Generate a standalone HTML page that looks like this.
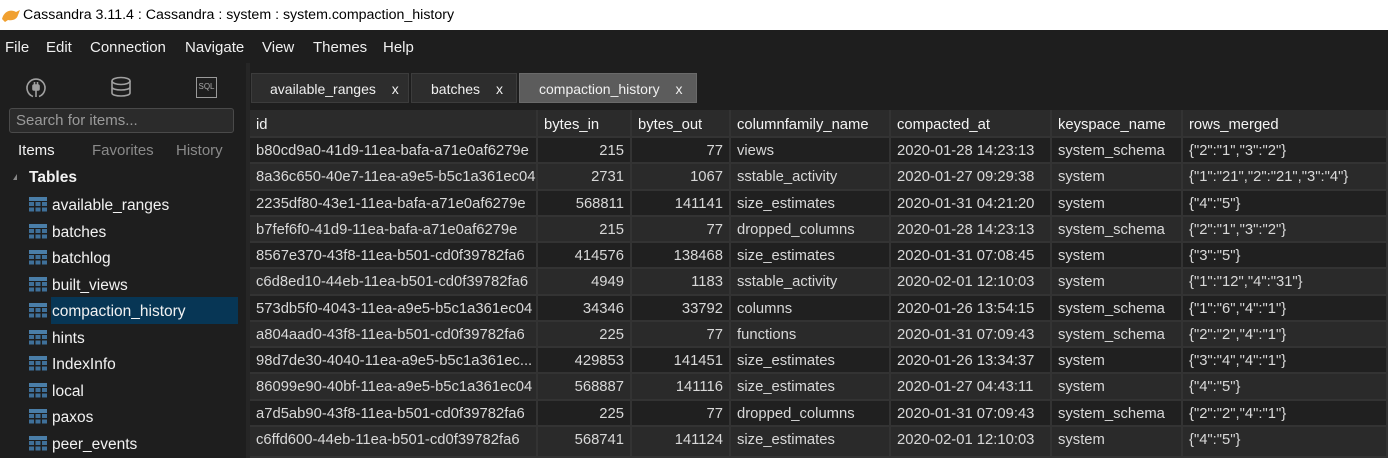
<!DOCTYPE html>
<html style="overflow:hidden;height:458px"><head><meta charset="utf-8"><style>
*{margin:0;padding:0;box-sizing:border-box}
body{width:1388px;height:458px;overflow:hidden;background:#1e1e1e;font-family:"Liberation Sans",sans-serif;color:#e8e8e8;position:relative}
.title{position:absolute;left:0;top:0;width:1388px;height:30px;background:#fff;color:#000;font-size:14.2px;line-height:30px;padding-left:23px}
.menu{position:absolute;top:30px;left:0;width:1388px;height:33px;background:#1e1e1e;font-size:15px;line-height:36px}
.menu span{position:absolute;color:#f0f0f0}
.side{position:absolute;top:63px;left:0;width:246px;height:395px;background:#1e1e1e}
.split{position:absolute;top:63px;left:246px;width:4px;height:395px;background:#262626}
.search{position:absolute;left:9px;top:108px;width:225px;height:25px;border:1px solid #4a4a4a;border-radius:3px;background:#2b2b2b;color:#9a9a9a;font-size:15px;line-height:24px;padding-left:6px}
.tree{position:absolute;font-size:15.5px;color:#f2f2f2}
.ti{position:absolute;left:29px;width:18px;height:15px}
.tab{position:absolute;top:73px;height:30px;background:#2d2d2d;border:1px solid #3c3c3c;font-size:14px;line-height:31px;color:#f0f0f0}
.row{position:absolute;left:250px;width:1138px;height:26px;overflow:hidden}
.c{position:absolute;top:0;height:100%;font-size:14.8px;padding:3px 6px 0;white-space:nowrap;overflow:hidden;border-right:2px solid #333;border-bottom:2px solid #333}
.r{text-align:right}
</style></head><body>
<div class="title"><svg style="position:absolute;left:1px;top:7px" width="20" height="16" viewBox="0 0 20 16"><path d="M1 12 C3 4 10 2 15 5 L19 3 L17 8 C16 12 12 14 7 13 L4 15 Z" fill="#f0a030"/></svg>Cassandra 3.11.4 : Cassandra : system : system.compaction_history</div>
<div class="menu"><span style="left:5px">File</span><span style="left:46px">Edit</span><span style="left:90px">Connection</span><span style="left:185px">Navigate</span><span style="left:262px">View</span><span style="left:313px">Themes</span><span style="left:383px">Help</span></div>
<div class="side"></div>
<div class="split"></div>
<svg style="position:absolute;left:25px;top:77px" width="22" height="22" viewBox="0 0 22 22" fill="none" stroke="#a0a0a0" stroke-width="1.6"><path d="M8 19.5 A9 9 0 1 1 14 19.5"/><path d="M11 13 V20"/><rect x="8" y="8" width="6" height="5" rx="1" fill="#a0a0a0"/><path d="M9.5 5 V8 M12.5 5 V8"/></svg>
<svg style="position:absolute;left:110px;top:76px" width="22" height="22" viewBox="0 0 22 22" fill="none" stroke="#a0a0a0" stroke-width="1.6"><ellipse cx="11" cy="5" rx="9" ry="3.5"/><path d="M2 5 V17 C2 21 20 21 20 17 V5 M2 11 C2 15 20 15 20 11"/></svg>
<div style="position:absolute;left:196px;top:77px;width:21px;height:21px;border:1.5px solid #9a9a9a;font-size:8px;color:#a8a8a8;text-align:center;line-height:18px">SQL</div>
<div class="search">Search for items...</div>
<div style="position:absolute;top:142px;left:18px;font-size:15px;color:#f2f2f2">Items</div>
<div style="position:absolute;top:142px;left:92px;font-size:15px;color:#8a8a8a">Favorites</div>
<div style="position:absolute;top:142px;left:176px;font-size:15px;color:#8a8a8a">History</div>
<div style="position:absolute;top:174px;left:13px;width:0;height:0;border-left:4px solid transparent;border-bottom:6px solid #888"></div>
<div style="position:absolute;top:169px;left:29px;font-size:15.5px;font-weight:bold;color:#f2f2f2">Tables</div>
<div style="position:absolute;left:51px;top:297px;width:187px;height:27px;background:#073655"></div>
<div id="tree"></div>
<div class="tab" style="left:251px;width:158px;padding-left:18px">available_ranges <span style="margin-left:12px">x</span></div>
<div class="tab" style="left:411px;width:106px;padding-left:19px">batches <span style="margin-left:12px">x</span></div>
<div class="tab" style="left:519px;width:178px;padding-left:19px;background:#5c5c5c;border-color:#6a6a6a">compaction_history <span style="margin-left:12px">x</span></div>
<div id="tbl"></div>
<script>
var names=["available_ranges","batches","batchlog","built_views","compaction_history","hints","IndexInfo","local","paxos","peer_events"];
var h="";names.forEach(function(n,i){var y=205+i*26.55;
h+='<svg class="ti" style="top:'+(y-8)+'px" viewBox="0 0 18 15"><rect width="18" height="4" fill="#4a7ea8"/><g fill="#3f7099"><rect x="0" y="5" width="5" height="4"/><rect x="6.5" y="5" width="5" height="4"/><rect x="13" y="5" width="5" height="4"/><rect x="0" y="10.5" width="5" height="4"/><rect x="6.5" y="10.5" width="5" height="4"/><rect x="13" y="10.5" width="5" height="4"/></g></svg>';
h+='<div class="tree" style="left:52px;top:'+(y-8)+'px">'+n+'</div>';});
document.getElementById("tree").innerHTML=h;
var cols=[[0,288],[288,94],[382,99],[481,160],[641,161],[802,131],[933,205]];
var rows=[["id","bytes_in","bytes_out","columnfamily_name","compacted_at","keyspace_name","rows_merged"],
["b80cd9a0-41d9-11ea-bafa-a71e0af6279e","215","77","views","2020-01-28 14:23:13","system_schema",'{"2":"1","3":"2"}'],
["8a36c650-40e7-11ea-a9e5-b5c1a361ec04","2731","1067","sstable_activity","2020-01-27 09:29:38","system",'{"1":"21","2":"21","3":"4"}'],
["2235df80-43e1-11ea-bafa-a71e0af6279e","568811","141141","size_estimates","2020-01-31 04:21:20","system",'{"4":"5"}'],
["b7fef6f0-41d9-11ea-bafa-a71e0af6279e","215","77","dropped_columns","2020-01-28 14:23:13","system_schema",'{"2":"1","3":"2"}'],
["8567e370-43f8-11ea-b501-cd0f39782fa6","414576","138468","size_estimates","2020-01-31 07:08:45","system",'{"3":"5"}'],
["c6d8ed10-44eb-11ea-b501-cd0f39782fa6","4949","1183","sstable_activity","2020-02-01 12:10:03","system",'{"1":"12","4":"31"}'],
["573db5f0-4043-11ea-a9e5-b5c1a361ec04","34346","33792","columns","2020-01-26 13:54:15","system_schema",'{"1":"6","4":"1"}'],
["a804aad0-43f8-11ea-b501-cd0f39782fa6","225","77","functions","2020-01-31 07:09:43","system_schema",'{"2":"2","4":"1"}'],
["98d7de30-4040-11ea-a9e5-b5c1a361ec...","429853","141451","size_estimates","2020-01-26 13:34:37","system",'{"3":"4","4":"1"}'],
["86099e90-40bf-11ea-a9e5-b5c1a361ec04","568887","141116","size_estimates","2020-01-27 04:43:11","system",'{"4":"5"}'],
["a7d5ab90-43f8-11ea-b501-cd0f39782fa6","225","77","dropped_columns","2020-01-31 07:09:43","system_schema",'{"2":"2","4":"1"}'],
["c6ffd600-44eb-11ea-b501-cd0f39782fa6","568741","141124","size_estimates","2020-02-01 12:10:03","system",'{"4":"5"}']];
var t="";rows.forEach(function(r,i){var top=i==0?110:138+(i-1)*26.25;var hh=i==0?28:26.25;
var bg=i==0?"#2b2b2b":(i%2==1?"#202020":"#2a2a2a");var col=i==0?"#f4f4f4":"#d8d8d8";
if(i==rows.length-1)hh=458-top;
t+='<div class="row" style="top:'+top+'px;height:'+hh+'px;background:'+bg+';color:'+col+'">';
r.forEach(function(v,j){var right=(i>0&&(j==1||j==2))?" r":"";t+='<div class="c'+right+'" style="left:'+cols[j][0]+'px;width:'+cols[j][1]+'px;line-height:'+(i==0?24:21)+'px">'+v.replace(/</g,"&lt;")+'</div>';});
t+='</div>';});
document.getElementById("tbl").innerHTML=t;
</script>
</body></html>
